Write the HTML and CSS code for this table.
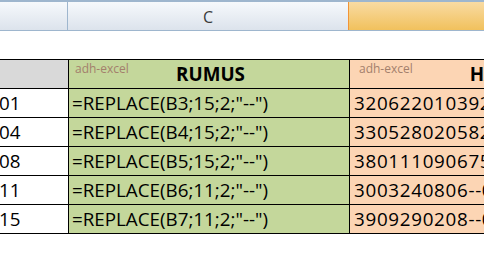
FILE: index.html
```
<!DOCTYPE html>
<html>
<head>
<meta charset="utf-8">
<link rel="stylesheet" href="styles.css">
</head>
<body>
<div class="colbar">
  <div class="colhead colb"></div>
  <div class="colhead colc">C</div>
  <div class="colhead cold"></div>
</div>
<div class="blank"></div>
<div class="sheet">
  <div class="cell b head"></div>
  <div class="cell c head"><span class="wm">adh-excel</span><span class="title">RUMUS</span></div>
  <div class="cell d head"><span class="wm">adh-excel</span><span class="title">HASIL</span></div>

  <div class="cell b"><span class="tail">01</span></div>
  <div class="cell c">=REPLACE(B3;15;2;"--")</div>
  <div class="cell d">32062201039201--01</div>

  <div class="cell b"><span class="tail">04</span></div>
  <div class="cell c">=REPLACE(B4;15;2;"--")</div>
  <div class="cell d">33052802058204--04</div>

  <div class="cell b"><span class="tail">08</span></div>
  <div class="cell c">=REPLACE(B5;15;2;"--")</div>
  <div class="cell d">38011109067508--08</div>

  <div class="cell b"><span class="tail">11</span></div>
  <div class="cell c">=REPLACE(B6;11;2;"--")</div>
  <div class="cell d">3003240806--0611</div>

  <div class="cell b"><span class="tail">15</span></div>
  <div class="cell c">=REPLACE(B7;11;2;"--")</div>
  <div class="cell d">3909290208--0815</div>
</div>
</body>
</html>
```
FILE: styles.css
```
html, body {
  margin: 0;
  padding: 0;
  background: #ffffff;
  overflow: hidden;
  width: 484px;
  height: 254px;
}
body {
  font-family: "Open Sans", "Liberation Sans", sans-serif;
}
.colbar {
  display: grid;
  grid-template-columns: 68px 281px 290px;
  width: 639px;
  height: 31px;
  box-sizing: border-box;
  border-top: 2px solid #9eb6ce;
  border-bottom: 1px solid #9eb6ce;
}
.colhead {
  box-sizing: border-box;
  background: linear-gradient(#f6f9fc, #dce3ec);
  border-right: 1px solid #9eb6ce;
  display: flex;
  align-items: center;
  justify-content: center;
  font-size: 16px;
  color: #3b3b3b;
  padding-top: 1px;
}
.colc {
  border-right: 1px solid #f29436;
}
.cold {
  background: linear-gradient(#f9dba3, #f1c15d);
  border-right: none;
}
.blank {
  height: 28px;
}
.sheet {
  display: grid;
  grid-template-columns: 69px 281px 290px;
  grid-auto-rows: 29px;
  width: 640px;
  border-top: 1px solid #000;
}
.cell {
  box-sizing: border-box;
  border-right: 1px solid #000;
  border-bottom: 1px solid #000;
  font-size: 18.8px;
  color: #000;
  white-space: nowrap;
  overflow: hidden;
  display: flex;
  align-items: flex-end;
  padding: 0 0 1px 3px;
  line-height: 26px;
  position: relative;
}
.cell.b {
  background: #ffffff;
  padding-left: 0;
}
.cell.b.head {
  background: #d9d9d9;
}
.cell.c {
  background: #c4d79b;
}
.cell.d {
  background: #fcd5b4;
  border-right: none;
  padding-left: 4px;
  letter-spacing: 0.7px;
}
.tail {
  margin-left: -1px;
}
.head {
  justify-content: center;
}
.title {
  font-weight: bold;
  letter-spacing: 0;
}
.wm {
  position: absolute;
  left: 6px;
  top: 1px;
  font-size: 12px;
  line-height: 16px;
  color: #a3806c;
  font-weight: normal;
  letter-spacing: 0;
}
.cell.d .wm {
  left: 9px;
}
```
